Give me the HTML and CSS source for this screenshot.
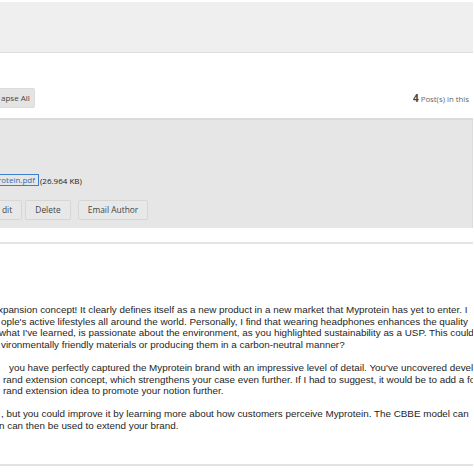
FILE: index.html
```html
<!DOCTYPE html>
<html>
<head>
<meta charset="utf-8">
<link rel="stylesheet" href="styles.css">
</head>
<body>
<div class="page">
  <div class="topbar"></div>
  <div class="toolbar">
    <button class="btn btn-collapse">apse All</button>
    <div class="count"><b>4</b> Post(s) in this</div>
  </div>
  <div class="panel">
    <div class="attach"><a class="file" href="#">rotein.pdf</a><span class="size">(26.964 KB)</span></div>
    <div class="actions">
      <button class="btn btn-edit">dit</button>
      <button class="btn btn-delete">Delete</button>
      <button class="btn btn-email">Email Author</button>
    </div>
  </div>
  <div class="card">
    <p class="para">
      <span class="ln i1">xpansion concept! It clearly defines itself as a new product in a new market that Myprotein has yet to enter. I</span>
      <span class="ln i2">ople's active lifestyles all around the world. Personally, I find that wearing headphones enhances the quality</span>
      <span class="ln i3">what I've learned, is passionate about the environment, as you highlighted sustainability as a USP. This could</span>
      <span class="ln i2">vironmentally friendly materials or producing them in a carbon-neutral manner?</span>
    </p>
    <p class="para">
      <span class="ln i4">you have perfectly captured the Myprotein brand with an impressive level of detail. You've uncovered develo</span>
      <span class="ln i5">rand extension concept, which strengthens your case even further. If I had to suggest, it would be to add a fo</span>
      <span class="ln i5">rand extension idea to promote your notion further.</span>
    </p>
    <p class="para">
      <span class="ln i2">, but you could improve it by learning more about how customers perceive Myprotein. The CBBE model can</span>
      <span class="ln i3">n can then be used to extend your brand.</span>
    </p>
  </div>
</div>
</body>
</html>
```
FILE: styles.css
```css
html, body {
  margin: 0;
  padding: 0;
  background: #ffffff;
  overflow: hidden;
}
.page {
  width: 473px;
  padding-top: 2px;
  font-family: "Open Sans", "Liberation Sans", sans-serif;
}
.topbar {
  height: 50px;
  background: #efefef;
  border-bottom: 1px solid #dedede;
}
.toolbar {
  display: flex;
  align-items: center;
  justify-content: space-between;
  padding-top: 35px;
  padding-bottom: 10px;
  white-space: nowrap;
}
.btn {
  font-family: "Open Sans", "Liberation Sans", sans-serif;
  font-size: 8.4px;
  color: #444;
  background: #e8e8e8;
  border: 1px solid #d6d6d6;
  border-radius: 2px;
  height: 20px;
  padding: 0 8px;
  margin: 0;
  line-height: 18px;
}
.btn-collapse {
  width: 35px;
  padding: 0 0 0 1px;
  text-align: left;
  font-size: 8px;
  background: #e4e4e4;
  border-color: #dcdcdc;
  border-left: none;
  border-radius: 0 2px 2px 0;
}
.count {
  font-size: 7.8px;
  color: #666;
  width: 60px;
  overflow: hidden;
  white-space: nowrap;
}
.count b {
  font-size: 10px;
  color: #444;
  font-weight: 700;
}
.panel {
  background: #e6e6e6;
  border-top: 2px solid #dadada;
  border-right: 1px solid #dcdcdc;
  padding: 54px 0 8px 0;
}
.attach {
  display: flex;
  align-items: center;
  height: 12px;
  font-size: 8px;
  white-space: nowrap;
}
.file {
  color: #2a6db5;
  text-decoration: none;
  outline: 1px solid #3b7fd0;
  padding: 0 1px 0 0;
  line-height: 10px;
  height: 10px;
  width: 37px;
  overflow: hidden;
  text-indent: -2px;
  margin-right: 2px;
}
.size {
  color: #222;
}
.actions {
  display: flex;
  margin-top: 14px;
  gap: 3px;
}
.btn-edit {
  width: 22px;
  padding: 0 0 0 2px;
  text-align: left;
  border-left: none;
  border-radius: 0 2px 2px 0;
}
.btn-delete {
  width: 46px;
  padding: 0;
}
.btn-email {
  width: 70px;
  padding: 0;
  margin-left: 4px;
}
.card {
  margin-top: 14px;
  border-top: 2px solid #e4e4e4;
  border-bottom: 2px solid #e2e2e2;
  padding: 60px 0 32px 0;
  font-family: "Liberation Sans", Arial, sans-serif;
  font-size: 9.85px;
  line-height: 11.7px;
  color: #1e1e1e;
}
.para {
  margin: 0 0 11.2px 0;
}
.para:last-child {
  margin-bottom: 0;
}
.ln {
  display: block;
  white-space: nowrap;
  overflow: hidden;
}
.i1 { text-indent: -2px; }
.i2 { text-indent: 1px; }
.i3 { text-indent: -1px; }
.i4 { text-indent: 9px; }
.i5 { text-indent: 3px; }
```
